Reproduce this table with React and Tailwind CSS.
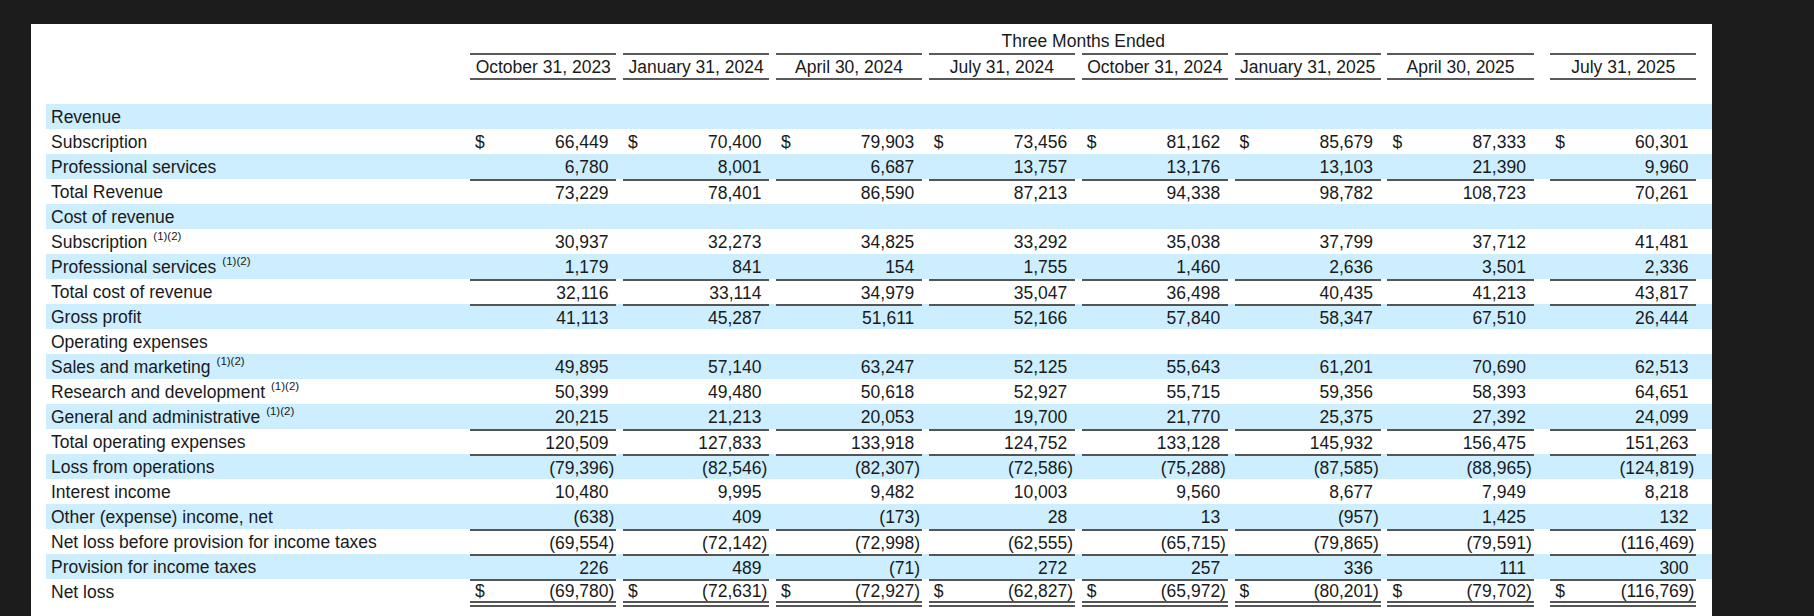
import React from "react";

const PERIODS = [
  "October 31, 2023",
  "January 31, 2024",
  "April 30, 2024",
  "July 31, 2024",
  "October 31, 2024",
  "January 31, 2025",
  "April 30, 2025",
  "July 31, 2025",
];

// line: rule above the figures (subtotal), total: double rule below
const ROWS = [
  { label: "Revenue" },
  { label: "Subscription", dollar: true, values: ["66,449", "70,400", "79,903", "73,456", "81,162", "85,679", "87,333", "60,301"] },
  { label: "Professional services", values: ["6,780", "8,001", "6,687", "13,757", "13,176", "13,103", "21,390", "9,960"] },
  { label: "Total Revenue", line: true, values: ["73,229", "78,401", "86,590", "87,213", "94,338", "98,782", "108,723", "70,261"] },
  { label: "Cost of revenue" },
  { label: "Subscription", note: true, values: ["30,937", "32,273", "34,825", "33,292", "35,038", "37,799", "37,712", "41,481"] },
  { label: "Professional services", note: true, values: ["1,179", "841", "154", "1,755", "1,460", "2,636", "3,501", "2,336"] },
  { label: "Total cost of revenue", line: true, values: ["32,116", "33,114", "34,979", "35,047", "36,498", "40,435", "41,213", "43,817"] },
  { label: "Gross profit", line: true, values: ["41,113", "45,287", "51,611", "52,166", "57,840", "58,347", "67,510", "26,444"] },
  { label: "Operating expenses" },
  { label: "Sales and marketing", note: true, values: ["49,895", "57,140", "63,247", "52,125", "55,643", "61,201", "70,690", "62,513"] },
  { label: "Research and development", note: true, values: ["50,399", "49,480", "50,618", "52,927", "55,715", "59,356", "58,393", "64,651"] },
  { label: "General and administrative", note: true, values: ["20,215", "21,213", "20,053", "19,700", "21,770", "25,375", "27,392", "24,099"] },
  { label: "Total operating expenses", line: true, values: ["120,509", "127,833", "133,918", "124,752", "133,128", "145,932", "156,475", "151,263"] },
  { label: "Loss from operations", line: true, values: ["(79,396)", "(82,546)", "(82,307)", "(72,586)", "(75,288)", "(87,585)", "(88,965)", "(124,819)"] },
  { label: "Interest income", values: ["10,480", "9,995", "9,482", "10,003", "9,560", "8,677", "7,949", "8,218"] },
  { label: "Other (expense) income, net", values: ["(638)", "409", "(173)", "28", "13", "(957)", "1,425", "132"] },
  { label: "Net loss before provision for income taxes", line: true, values: ["(69,554)", "(72,142)", "(72,998)", "(62,555)", "(65,715)", "(79,865)", "(79,591)", "(116,469)"] },
  { label: "Provision for income taxes", line: true, values: ["226", "489", "(71)", "272", "257", "336", "111", "300"] },
  { label: "Net loss", line: true, total: true, dollar: true, values: ["(69,780)", "(72,631)", "(72,927)", "(62,827)", "(65,972)", "(80,201)", "(79,702)", "(116,769)"] },
];

// label column, seven quarter columns, and the last one set a little further apart
const GRID = "grid grid-cols-[417.5px_repeat(7,146.3px)_156.1px] gap-x-[6.6px]";

function Figure({ value, dollar }) {
  const negative = value.startsWith("(");
  return (
    <>
      <span>{dollar ? "$" : ""}</span>
      <span>
        {value}
        {!negative && <span className="invisible">)</span>}
      </span>
    </>
  );
}

function Amount({ value, row, last }) {
  const spacing = last ? "ml-[9.8px]" : "";
  if (row.total) {
    return (
      <div className={`${spacing} flex flex-col`}>
        <div className="flex h-[22px] items-center justify-between border-t-2 border-[#555] pl-[5px] pr-[2px]">
          <Figure value={value} dollar={row.dollar} />
        </div>
        <div className="h-[6px] border-y-2 border-[#555]" />
      </div>
    );
  }
  return (
    <div
      className={`${spacing} flex h-[25px] items-center justify-between pl-[5px] pr-[2px] ${
        row.line ? "border-t-2 border-[#555]" : ""
      }`}
    >
      <Figure value={value} dollar={row.dollar} />
    </div>
  );
}

export default function App() {
  return (
    <div className="h-[616px] overflow-hidden bg-[#1c1c1c] pl-[31px] pt-[24px] font-['Liberation_Sans',Arial,sans-serif] text-[17.5px] leading-[20px] text-[#1a1a1a]">
      <div className="h-[592px] w-[1681px] bg-white pl-[15px] pt-[5px]">
        {/* column headings */}
        <div className={GRID}>
          <div className="col-start-2 col-end-[-1] flex h-[24px] items-center justify-center">Three Months Ended</div>
        </div>
        <div className={GRID}>
          <div />
          {PERIODS.map((p, i) => (
            <div
              key={p}
              className={`flex h-[27px] items-center justify-center border-y-2 border-[#5a5a5a] ${i === 7 ? "ml-[9.8px]" : ""}`}
            >
              {p}
            </div>
          ))}
        </div>

        <div className="mt-[24px]">
          {ROWS.map((row, r) => (
            <div key={r} className={`${GRID} ${r % 2 === 0 ? "bg-[#cceeff]" : "bg-white"}`}>
              <div className="flex h-[25px] items-center pl-[5px]">
                {row.label}
                {row.note && (
                  <span className="relative -top-[5px] ml-[6px] text-[11.5px] leading-none">(1)(2)</span>
                )}
              </div>
              {row.values
                ? row.values.map((v, i) => <Amount key={i} value={v} row={row} last={i === 7} />)
                : null}
            </div>
          ))}
        </div>
      </div>
    </div>
  );
}
